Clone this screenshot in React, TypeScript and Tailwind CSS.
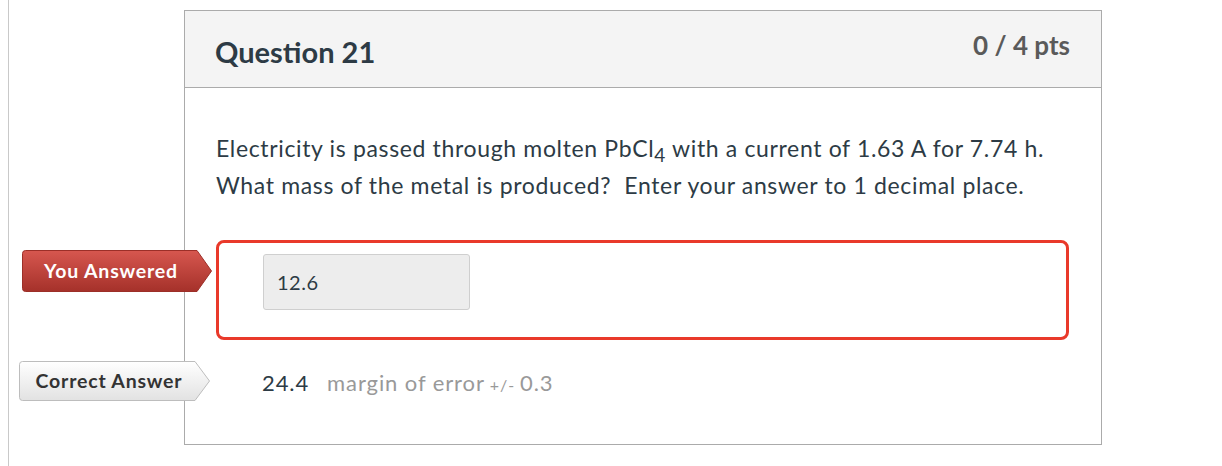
import React from "react";

function Label({
  text,
  variant,
}: {
  text: string;
  variant: "red" | "gray";
}) {
  const red = variant === "red";
  const w = red ? 190 : 191;
  const h = red ? 42 : 40;
  const body = red ? 175 : 176;
  const gid = red ? "gRed" : "gGray";
  return (
    <div
      className={
        red
          ? "relative h-[42px] w-[190px] flex items-center"
          : "relative h-[40px] w-[191px] flex items-center"
      }
    >
      <svg
        width={w}
        height={h}
        viewBox={`0 0 ${w} ${h}`}
        className="absolute left-0 top-0"
      >
        <defs>
          <linearGradient id={gid} x1="0" y1="0" x2="0" y2="1">
            {red ? (
              <>
                <stop offset="0" stopColor="#d7574f" />
                <stop offset="1" stopColor="#a5312a" />
              </>
            ) : (
              <>
                <stop offset="0" stopColor="#ffffff" />
                <stop offset="1" stopColor="#e2e2e2" />
              </>
            )}
          </linearGradient>
        </defs>
        <path
          d={`M3.5 0.5 H${body} L${w - 0.5} ${h / 2} L${body} ${h - 0.5} H3.5 Q0.5 ${h - 0.5} 0.5 ${h - 3.5} V3.5 Q0.5 0.5 3.5 0.5 Z`}
          fill={`url(#${gid})`}
          stroke={red ? "#9c2f28" : "#bdbdbd"}
          strokeWidth="1"
        />
      </svg>
      <span
        className={
          red
            ? "relative w-[175px] pl-[3px] text-center text-[19.5px] tracking-[0.8px] leading-none font-bold text-white"
            : "relative w-[176px] pl-[4px] text-center text-[19.5px] tracking-[0.8px] leading-none font-bold text-[#333333]"
        }
      >
        {text}
      </span>
    </div>
  );
}

export default function App() {
  return (
    <div className="relative h-[466px] w-[1222px] overflow-hidden bg-white font-['Lato',_'Noto_Sans',_sans-serif] text-[#2d3b45]">
      <div className="flex h-full">
        <div className="ml-2 h-full w-0 border-l border-[#c9c9c9]" />
        <div className="ml-[175px] mt-[10px] h-[435px] w-[918px] border border-[#ababab]">
          {/* header */}
          <div className="flex h-[77px] items-start justify-between border-b border-[#ababab] bg-[#f4f4f4] pl-[30px] pr-[31px]">
            <div className="mt-[26px] text-[29px] font-bold leading-none text-[#2d3b45]">
              Question 21
            </div>
            <div className="mt-[21px] text-[26px] font-bold leading-none text-[#5a5a5a]">
              0 / 4 pts
            </div>
          </div>
          {/* body */}
          <div className="pl-[31px] pr-[31px] pt-[42px]">
            <p className="text-[23px] leading-[37px] tracking-[0.65px] text-[#2d3b45]">
              Electricity is passed through molten PbCl
              <span className="relative top-[5px] text-[19px] leading-none">
                4
              </span>{" "}
              with a current of 1.63 A for 7.74 h.
              <br />
              What mass of the metal is produced?&nbsp; Enter your answer to 1
              decimal place.
            </p>

            {/* You answered */}
            <div className="relative mt-[36px]">
              <div className="absolute -left-[194px] top-[10px]">
                <Label text="You Answered" variant="red" />
              </div>
              <div className="h-[100px] w-[853px] rounded-[8px] border-[3px] border-[#e9392a] pl-[44px] pt-[11px]">
                <div className="flex h-[56px] w-[207px] items-center rounded-[3px] border border-[#cfcfcf] bg-[#ededed] pl-[13px] text-[20px] tracking-[0.5px] text-[#2d3b45]">
                  12.6
                </div>
              </div>
            </div>

            {/* Correct answer */}
            <div className="relative mt-[21px] flex h-[40px] items-center">
              <div className="absolute -left-[197px] top-0">
                <Label text="Correct Answer" variant="gray" />
              </div>
              <div className="ml-[46px] mt-[3px] flex items-baseline text-[22px] leading-none tracking-[0.9px]">
                <span className="text-[#2d3b45]">24.4</span>
                <span className="ml-[18px] text-[#999999]">margin of error</span>
                <span className="ml-[5px] text-[16px] text-[#999999]">+/-</span>
                <span className="ml-[5px] text-[#999999]">0.3</span>
              </div>
            </div>
          </div>
        </div>
      </div>
    </div>
  );
}
